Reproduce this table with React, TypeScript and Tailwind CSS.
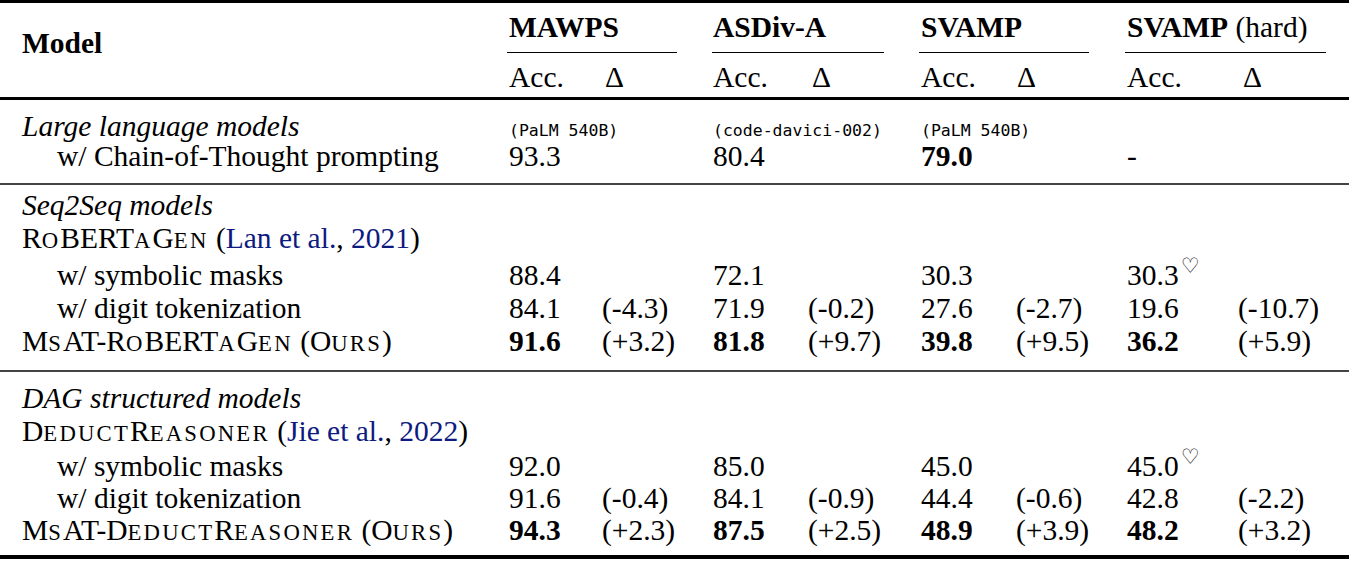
import React from "react";

// Results table: MAWPS / ASDiv-A / SVAMP / SVAMP (hard)

type Cell = string | { t: string; b?: boolean; heart?: boolean; mono?: boolean };

const GRID =
  "grid grid-cols-[509px_93px_111px_95px_113px_95px_111px_111px_111px]";
const SUB = "grid grid-cols-[93px_111px_95px_113px_95px_111px_111px_111px]";

function Heart() {
  return (
    <span className="relative -top-[12px] ml-[2px] font-['DejaVu_Sans'] text-[21px] leading-none">
      ♡
    </span>
  );
}

// LaTeX-like small caps: lowercase runs become smaller, slightly spaced capitals
function Sc({ s }: { s: string }) {
  const parts = s.match(/[a-z]+|[^a-z]+/g) ?? [];
  return (
    <>
      {parts.map((p, i) =>
        /[a-z]/.test(p[0]) ? (
          <span key={i} className="text-[0.77em] tracking-[2.2px]">
            {p.toUpperCase()}
          </span>
        ) : (
          <span key={i}>{p}</span>
        )
      )}
    </>
  );
}

function Val({ c }: { c: Cell }) {
  if (typeof c === "string") return <span>{c}</span>;
  if (c.mono)
    return (
      <span className="font-['DejaVu_Sans_Mono'] text-[16.5px] whitespace-nowrap">
        {c.t}
      </span>
    );
  return (
    <span className={c.b ? "font-bold" : ""}>
      {c.t}
      {c.heart && <Heart />}
    </span>
  );
}

function Row({
  label,
  cells = [],
  h,
}: {
  label: React.ReactNode;
  cells?: Cell[];
  h: string;
}) {
  return (
    <div className={`${GRID} ${h} items-start`}>
      <div className="whitespace-nowrap">{label}</div>
      {Array.from({ length: 8 }).map((_, i) => (
        <div key={i} className="whitespace-nowrap">
          {cells[i] !== undefined && <Val c={cells[i]} />}
        </div>
      ))}
    </div>
  );
}

const LINK = "text-[#0d1a80]";

function Indent({ children }: { children: React.ReactNode }) {
  return <span className="pl-[57px]">{children}</span>;
}

function Ital({ children }: { children: React.ReactNode }) {
  return <span className="pl-[22px] italic">{children}</span>;
}

function Name({ children }: { children: React.ReactNode }) {
  return <span className="pl-[22px]">{children}</span>;
}

function Group({ name, extra, w, ml }: { name: string; extra?: string; w: string; ml: string }) {
  return (
    <div className="col-span-2 flex h-[50px] flex-col justify-between">
      <div className="pt-[8px]">
        <span className="font-bold">{name}</span>
        {extra && <span> {extra}</span>}
      </div>
      <div className={`h-px bg-black ${w} ${ml}`} />
    </div>
  );
}

export default function App() {
  return (
    <div className="h-[561px] w-[1349px] bg-white font-['Liberation_Serif',serif] text-[29.5px] leading-[32px] text-black">
      <div className="h-[3px] bg-black" />

      {/* header */}
      <div className="flex h-[94px]">
        <div className="w-[509px] pl-[22px] pt-[24px] font-bold">Model</div>
        <div className="flex-1">
          <div className={SUB}>
            <Group name="MAWPS" w="w-[170px]" ml="-ml-[2px]" />
            <Group name="ASDiv-A" w="w-[172px]" ml="-ml-[1px]" />
            <Group name="SVAMP" w="w-[170px]" ml="-ml-[2px]" />
            <Group name="SVAMP" extra="(hard)" w="w-[201px]" ml="-ml-[2px]" />
          </div>
          <div className={`${SUB} pt-[8px]`}>
            <div>Acc.</div>
            <div className="pl-[3px]">Δ</div>
            <div>Acc.</div>
            <div className="pl-[4px]">Δ</div>
            <div>Acc.</div>
            <div className="pl-[1px]">Δ</div>
            <div>Acc.</div>
            <div className="pl-[5px]">Δ</div>
          </div>
        </div>
      </div>

      <div className="h-[3px] bg-black" />

      {/* large language models */}
      <div className="h-[83px] pt-[10px]">
        <Row
          h="h-[30px]"
          label={<Ital>Large language models</Ital>}
          cells={[
            { t: "(PaLM 540B)", mono: true },
            "",
            { t: "(code-davici-002)", mono: true },
            "",
            { t: "(PaLM 540B)", mono: true },
          ]}
        />
        <Row
          h="h-[32px]"
          label={<Indent>w/ Chain-of-Thought prompting</Indent>}
          cells={["93.3", "", "80.4", "", { t: "79.0", b: true }, "", "-", ""]}
        />
      </div>

      <div className="h-[2px] bg-[#444]" />

      {/* seq2seq */}
      <div className="h-[185px] pt-[4px]">
        <Row h="h-[33px]" label={<Ital>Seq2Seq models</Ital>} />
        <Row
          h="h-[37px]"
          label={
            <Name>
              <Sc s="RoBERTaGen" /> (<span className={LINK}>Lan et al.</span>,{" "}
              <span className={LINK}>2021</span>)
            </Name>
          }
        />
        <Row
          h="h-[33px]"
          label={<Indent>w/ symbolic masks</Indent>}
          cells={["88.4", "", "72.1", "", "30.3", "", { t: "30.3", heart: true }]}
        />
        <Row
          h="h-[33px]"
          label={<Indent>w/ digit tokenization</Indent>}
          cells={["84.1", "(-4.3)", "71.9", "(-0.2)", "27.6", "(-2.7)", "19.6", "(-10.7)"]}
        />
        <Row
          h="h-[32px]"
          label={
            <Name>
              <Sc s="MsAT-RoBERTaGen (Ours)" />
            </Name>
          }
          cells={[
            { t: "91.6", b: true },
            "(+3.2)",
            { t: "81.8", b: true },
            "(+9.7)",
            { t: "39.8", b: true },
            "(+9.5)",
            { t: "36.2", b: true },
            "(+5.9)",
          ]}
        />
      </div>

      <div className="h-[2px] bg-[#444]" />

      {/* DAG */}
      <div className="h-[183px] pt-[10px]">
        <Row h="h-[33px]" label={<Ital>DAG structured models</Ital>} />
        <Row
          h="h-[35px]"
          label={
            <Name>
              <Sc s="DeductReasoner" /> (<span className={LINK}>Jie et al.</span>,{" "}
              <span className={LINK}>2022</span>)
            </Name>
          }
        />
        <Row
          h="h-[32px]"
          label={<Indent>w/ symbolic masks</Indent>}
          cells={["92.0", "", "85.0", "", "45.0", "", { t: "45.0", heart: true }]}
        />
        <Row
          h="h-[32px]"
          label={<Indent>w/ digit tokenization</Indent>}
          cells={["91.6", "(-0.4)", "84.1", "(-0.9)", "44.4", "(-0.6)", "42.8", "(-2.2)"]}
        />
        <Row
          h="h-[32px]"
          label={
            <Name>
              <Sc s="MsAT-DeductReasoner (Ours)" />
            </Name>
          }
          cells={[
            { t: "94.3", b: true },
            "(+2.3)",
            { t: "87.5", b: true },
            "(+2.5)",
            { t: "48.9", b: true },
            "(+3.9)",
            { t: "48.2", b: true },
            "(+3.2)",
          ]}
        />
      </div>

      <div className="h-[4px] bg-black" />
    </div>
  );
}
